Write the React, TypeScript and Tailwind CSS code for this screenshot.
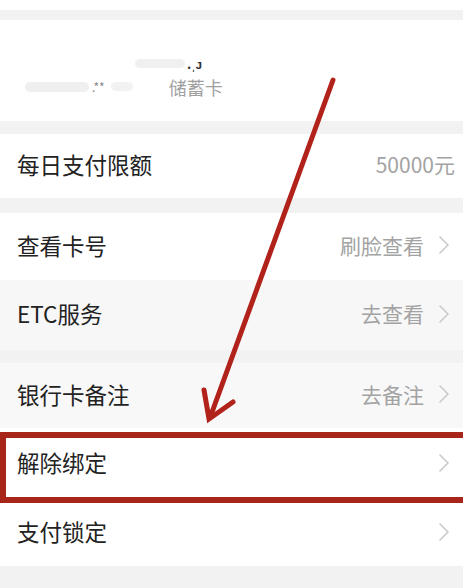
import React from "react";

function Chevron() {
  return (
    <svg width="12" height="20" viewBox="0 0 12 20" className="shrink-0">
      <polyline points="2,2 10,10 2,18" fill="none" stroke="#c9c9c9" strokeWidth="1.6" strokeLinecap="round" strokeLinejoin="round" />
    </svg>
  );
}

function Row({ label, value, chevron = true, h, bg, pr = "pr-[13px]" }: { label: string; value?: string; chevron?: boolean; h: string; bg: string; pr?: string }) {
  return (
    <div className={`flex items-center justify-between pl-[17px] pb-[3px] ${pr} ${h} ${bg}`}>
      <span className="text-[22.5px] text-[#222222] leading-none">{label}</span>
      <div className="flex items-center gap-[14px]">
        {value && <span className="text-[21px] text-[#a3a3a3] leading-none">{value}</span>}
        {chevron && <Chevron />}
      </div>
    </div>
  );
}

export default function App() {
  return (
    <div className="relative w-[463px] h-[588px] overflow-hidden bg-[#f2f2f2] font-['Noto_Sans_CJK_SC',sans-serif]">
      <div className="h-[10px] bg-white" />
      <div className="h-[10px]" />
      <div className="h-[101px] bg-white flex flex-col pt-[36px] gap-[6px]">
        <div className="flex items-center h-[14px]">
          <div className="ml-[135px] w-[50px] h-[9px] rounded-full bg-[#f0f0f0]" />
          <span className="ml-[2px] text-[13px] text-[#333] leading-none font-bold">.ˌᴊ</span>
        </div>
        <div className="flex items-center h-[21px]">
          <div className="ml-[25px] w-[64px] h-[10px] rounded-full bg-[#efefef]" />
          <span className="ml-[3px] text-[12px] text-[#888] leading-none">.**</span>
          <div className="ml-[6px] w-[22px] h-[9px] rounded-full bg-[#f2f2f2]" />
          <span className="ml-[36px] text-[18px] text-[#a0a0a0] leading-none">储蓄卡</span>
        </div>
      </div>
      <div className="h-[13px]" />
      <Row label="每日支付限额" value="50000元" chevron={false} h="h-[64px]" bg="bg-white" pr="pr-[8px]" />
      <div className="h-[15px]" />
      <Row label="查看卡号" value="刷脸查看" h="h-[67px]" bg="bg-white" />
      <Row label="ETC服务" value="去查看" h="h-[70px]" bg="bg-[#f7f7f7]" />
      <div className="h-[13px]" />
      <Row label="银行卡备注" value="去备注" h="h-[65px]" bg="bg-[#f8f8f8]" />
      <Row label="解除绑定" h="h-[72px]" bg="bg-white" />
      <Row label="支付锁定" h="h-[66px]" bg="bg-white" />

      <div className="absolute left-0 top-[432px] w-[470px] h-[71px] border-[6px] border-[#a82619] pointer-events-none" />

      <svg className="absolute inset-0 pointer-events-none" width="463" height="588" viewBox="0 0 463 588">
        <line x1="333" y1="80" x2="211" y2="415" stroke="#b1221b" strokeWidth="5" strokeLinecap="round" />
        <polyline points="204,390 209,419 233,402" fill="none" stroke="#b1221b" strokeWidth="5" strokeLinecap="round" strokeLinejoin="miter" />
      </svg>
    </div>
  );
}
